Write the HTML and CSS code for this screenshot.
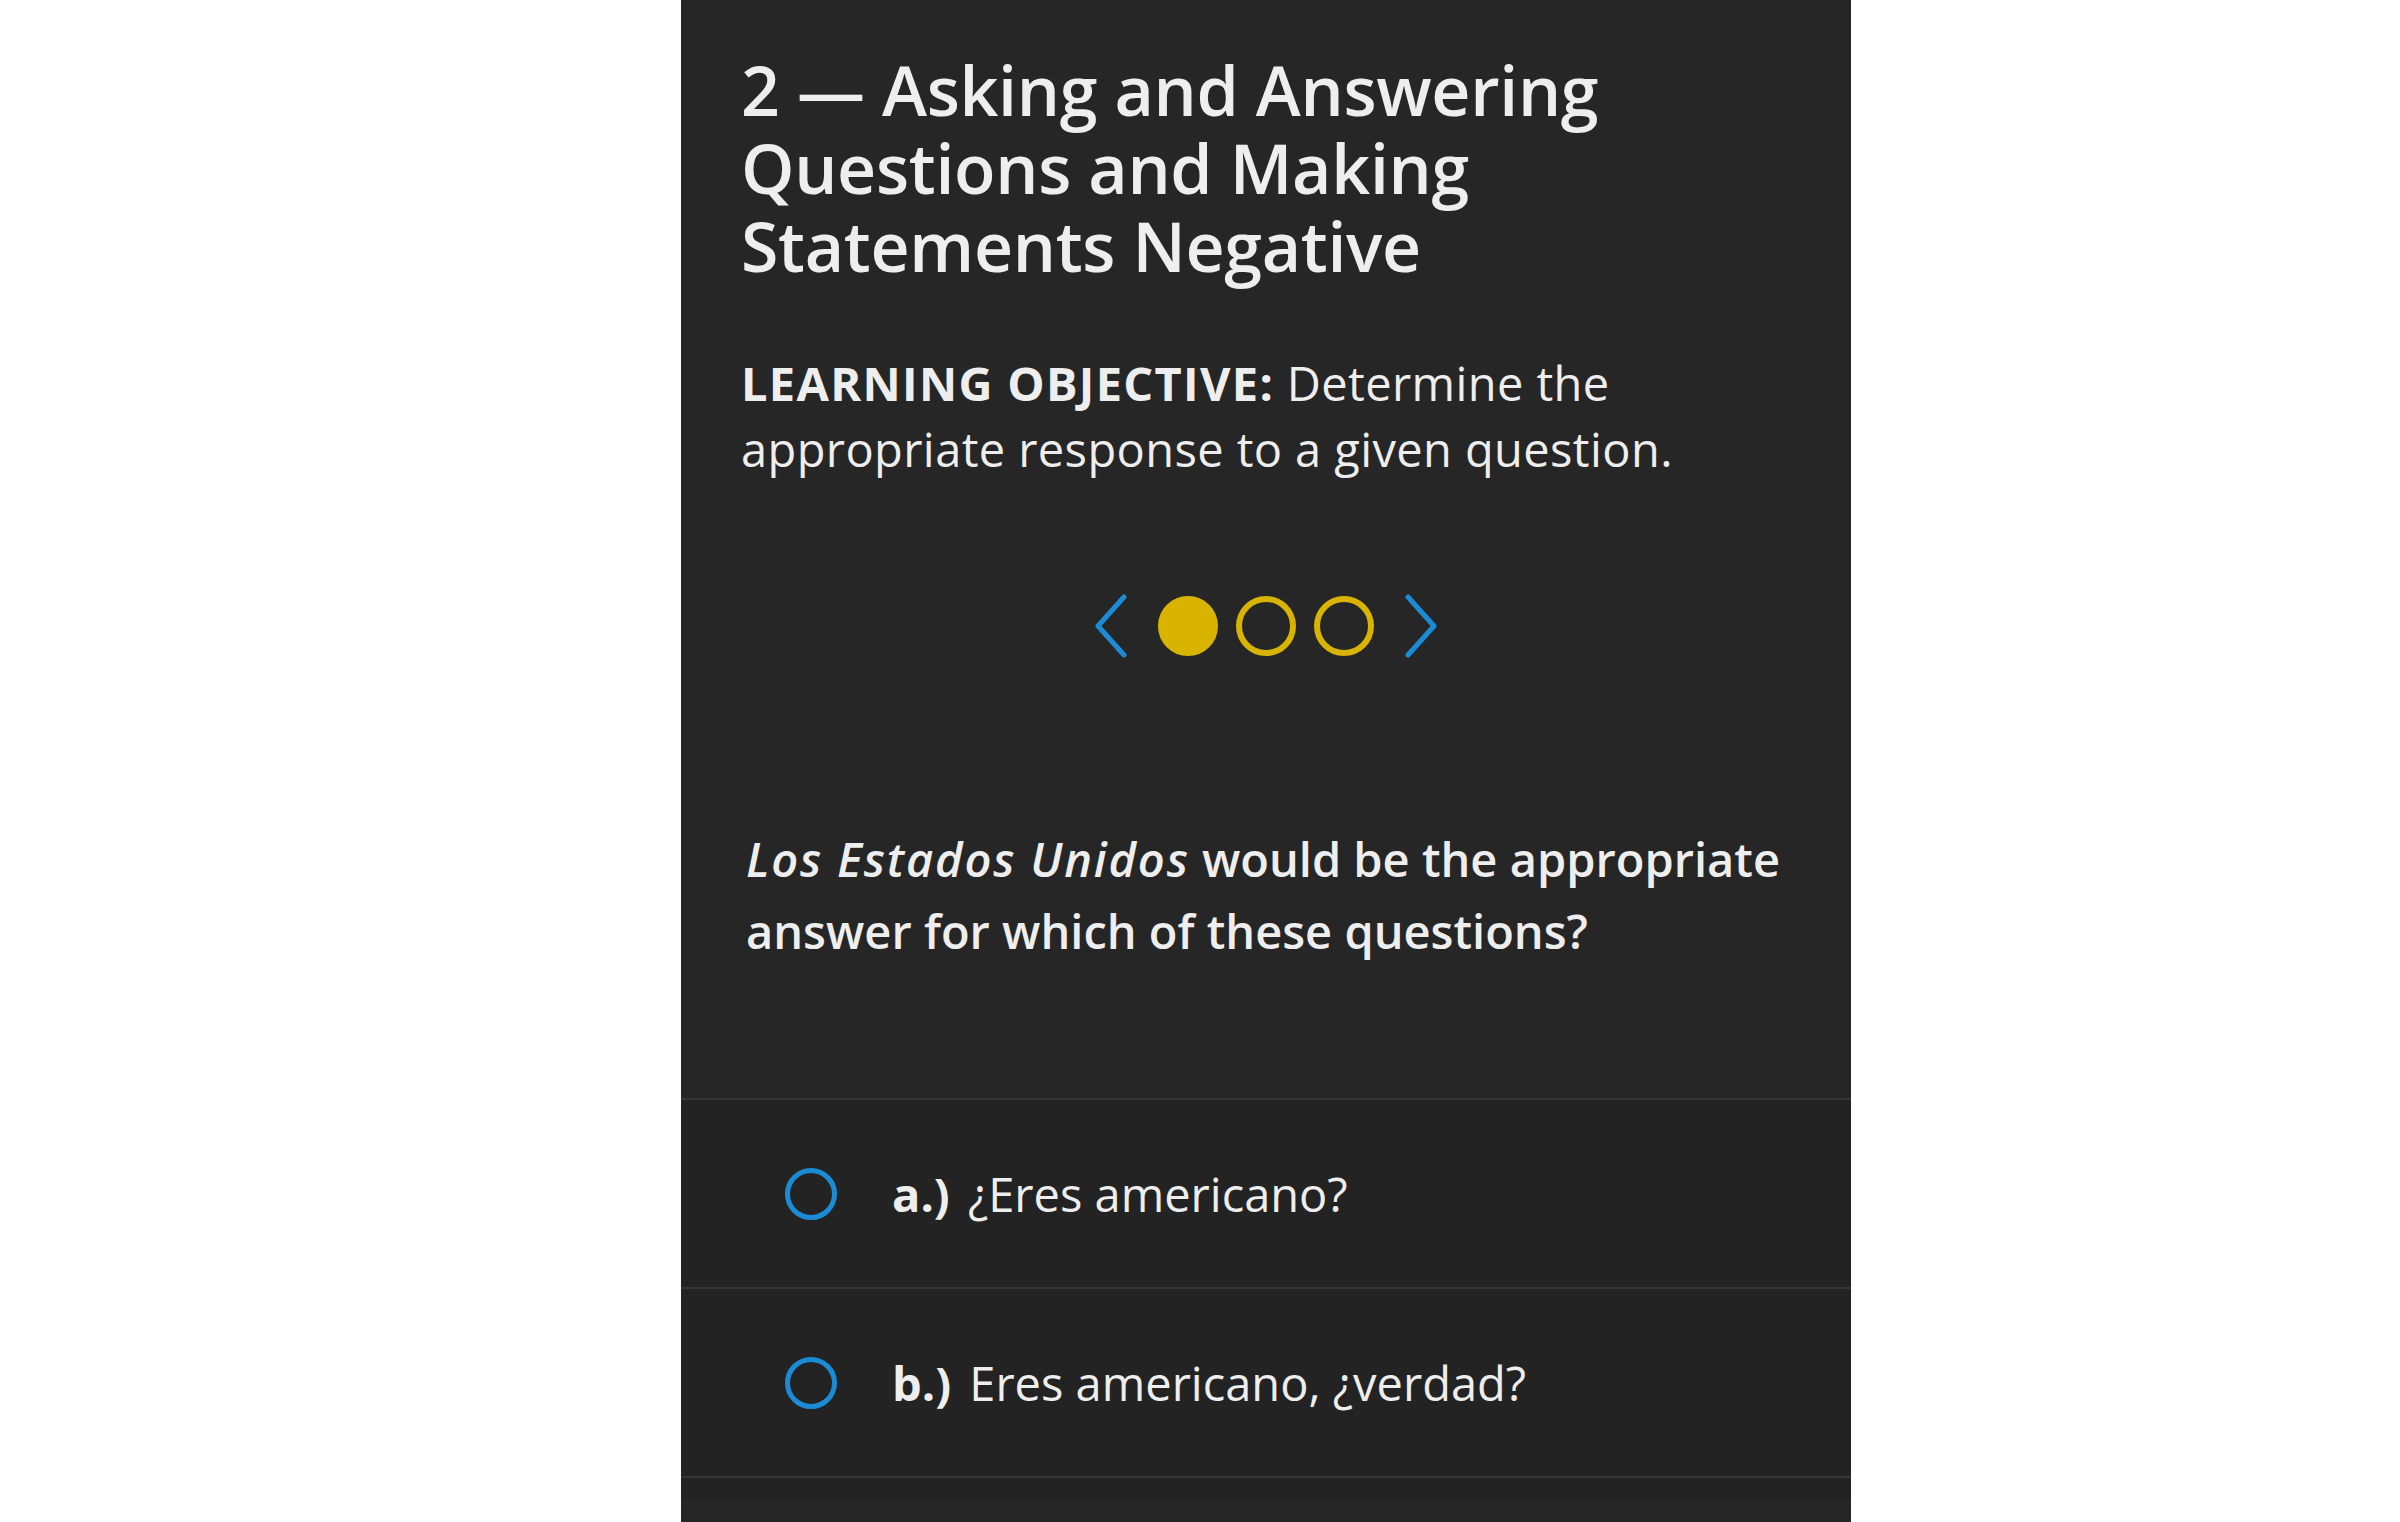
FILE: index.html
```html
<!DOCTYPE html>
<html lang="en">
<head>
    <meta charset="UTF-8">
    <meta name="viewport" content="width=device-width, initial-scale=1.0">
    <title>Asking and Answering Questions</title>
    <link rel="stylesheet" href="styles.css">
</head>
<body>

    <main class="lesson">
        <header class="lesson-head">
            <h1 class="lesson-title">2 — Asking and Answering Questions and Making Statements Negative</h1>
            <p class="objective"><strong>LEARNING OBJECTIVE:</strong> Determine the appropriate response to a given question.</p>
        </header>

        <nav class="pager">
            <button class="pager-arrow" aria-label="Previous">
                <svg width="32" height="64" viewBox="0 0 32 64"><polyline points="29,3 3,32 29,61" /></svg>
            </button>
            <span class="dot active"></span>
            <span class="dot"></span>
            <span class="dot"></span>
            <button class="pager-arrow" aria-label="Next">
                <svg width="32" height="64" viewBox="0 0 32 64"><polyline points="3,3 29,32 3,61" /></svg>
            </button>
        </nav>

        <p class="prompt"><em>Los Estados Unidos</em> would be the appropriate answer for which of these questions?</p>

        <ul class="choices">
            <li class="choice"><span class="radio"></span><span class="choice-text"><b>a.)</b> ¿Eres americano?</span></li>
            <li class="choice"><span class="radio"></span><span class="choice-text"><b>b.)</b> Eres americano, ¿verdad?</span></li>
        </ul>
    </main>

</body>
</html>
```

FILE: styles.css
```css
body {
    margin: 0;
    background: #fff;
    font-family: 'Open Sans', Lato, sans-serif;
    color: #eeeeee;
    height: 1522px;
    overflow: hidden;
}
.lesson {
    width: 1170px;
    margin-left: 681px;
    height: 1522px;
    overflow: hidden;
    background: #262626;
}
.lesson-head {
    padding: 51px 62px 0 60px;
}
.lesson-title {
    margin: 0;
    font-size: 68px;
    line-height: 78px;
    font-weight: 600;
    letter-spacing: -0.3px;
}
.objective {
    margin: 65px 0 0;
    font-size: 47px;
    line-height: 66px;
    letter-spacing: 0.4px;
}
.objective strong {
    font-weight: 700;
    letter-spacing: 1.3px;
}
.pager {
    display: flex;
    justify-content: center;
    align-items: center;
    gap: 18px;
    margin-top: 112px;
    height: 64px;
}
.pager-arrow {
    background: none;
    border: 0;
    padding: 0;
    margin: 0 13px;
    display: flex;
}
.pager-arrow polyline {
    fill: none;
    stroke: #1b8bd6;
    stroke-width: 5;
    stroke-linecap: round;
    stroke-linejoin: round;
}
.dot {
    width: 60px;
    height: 60px;
    box-sizing: border-box;
    border-radius: 50%;
    border: 6px solid #d8b400;
}
.dot.active {
    background: #d8b400;
}
.prompt {
    margin: 165px 0 0;
    padding: 0 30px 0 65px;
    font-size: 47px;
    line-height: 72px;
    font-weight: 600;
}
.prompt em {
    font-weight: 600;
    letter-spacing: 1.8px;
}
.choices {
    list-style: none;
    margin: 131px 0 0;
    padding: 0;
    min-height: 400px;
    background: #232323;
    border-top: 2px solid #353535;
}
.choice {
    display: flex;
    align-items: center;
    height: 187px;
    padding-left: 104px;
    border-bottom: 2px solid #353535;
    font-size: 47px;
}
.radio {
    width: 52px;
    height: 52px;
    box-sizing: border-box;
    border-radius: 50%;
    border: 5px solid #1b8bd6;
    margin-right: 55px;
    flex-shrink: 0;
}
.choice-text b {
    font-weight: 700;
    margin-right: 6px;
}
```
